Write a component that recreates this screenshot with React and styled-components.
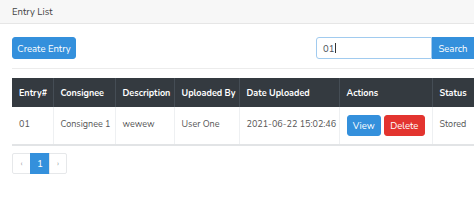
import React from "react";
import styled, { createGlobalStyle } from "styled-components";

const Global = createGlobalStyle`
  html, body { margin: 0; padding: 0; background: #fff; overflow: hidden; }
  body { font-family: "Nunito", Lato, "Noto Sans", sans-serif; color: #212529; }
  * { box-sizing: border-box; }
`;

const Card = styled.div`
  width: 474px;
  overflow: hidden;
`;

const CardHeader = styled.div`
  height: 24px;
  background: #f7f7f7;
  border-bottom: 1px solid #e6e6e6;
  padding: 0 12px;
  display: flex;
  align-items: center;
  font-size: 9.5px;
  color: #444;
`;

const Body = styled.div`
  padding: 12px 0 0 12px;
`;

const Toolbar = styled.div`
  display: flex;
  justify-content: space-between;
  align-items: center;
  height: 22px;
  margin-top: 1px;
`;

const Button = styled.button`
  font-family: inherit;
  font-size: 9.5px;
  color: #fff;
  background: ${(p) => p.$bg || "#3490dc"};
  border: 1px solid ${(p) => p.$bg || "#3490dc"};
  border-radius: ${(p) => (p.$flat ? "0" : "3px")};
  height: ${(p) => p.$h || 22}px;
  width: ${(p) => p.$w}px;
  padding: 0;
  display: inline-flex;
  align-items: center;
  justify-content: center;
  cursor: pointer;
`;

const SearchGroup = styled.div`
  display: flex;
  height: 22px;
`;

const SearchInput = styled.div`
  width: 116px;
  height: 22px;
  border: 1px solid #a1cbef;
  border-radius: 3px 0 0 3px;
  font-size: 9.5px;
  color: #495057;
  display: flex;
  align-items: center;
  padding-left: 6px;
`;

const Caret = styled.span`
  display: inline-block;
  width: 1px;
  height: 10px;
  background: #333;
  margin-left: 1px;
`;

const Hr = styled.div`
  height: 1px;
  background: #ececec;
  margin: 9px 0 9px 0;
`;

const Table = styled.table`
  border-collapse: collapse;
  table-layout: fixed;
  width: 470px;
  font-size: 9px;
`;

const Th = styled.th`
  background: #343a40;
  color: #fff;
  font-weight: 700;
  text-align: left;
  height: 29px;
  padding: 0 7px;
  border-left: 1px solid #454d55;
  white-space: nowrap;
  overflow: hidden;
  &:first-child { border-left: none; }
`;

const Td = styled.td`
  height: 38px;
  padding: 0 7px;
  vertical-align: top;
  padding-top: 11px;
  color: #555;
  border-left: 1px solid #eef0f2;
  border-bottom: 2px solid #e2e4e6;
  white-space: nowrap;
  overflow: hidden;
  &:first-child { border-left: none; }
`;

const ActionTd = styled(Td)`
  padding-top: 8px;
  padding-left: 7px;
`;

const Actions = styled.div`
  display: flex;
  gap: 3px;
`;

const Pager = styled.div`
  display: flex;
  margin-top: 7px;
  height: 21px;
`;

const PageItem = styled.div`
  width: ${(p) => p.$w}px;
  height: 21px;
  display: flex;
  align-items: center;
  justify-content: center;
  font-size: ${(p) => (p.$active ? 10 : 8)}px;
  color: ${(p) => (p.$active ? "#fff" : "#9aa0a6")};
  background: ${(p) => (p.$active ? "#3490dc" : "#fff")};
  border: 1px solid ${(p) => (p.$active ? "#3490dc" : "#e6e8ea")};
  margin-left: -1px;
  &:first-child { margin-left: 0; border-radius: 2px 0 0 2px; }
  &:last-child { border-radius: 0 2px 2px 0; }
`;

const cols = [41, 62, 59, 65, 100, 93, 50];

export default function App() {
  return (
    <Card>
      <Global />
      <CardHeader>Entry List</CardHeader>
      <Body>
        <Toolbar>
          <Button $h={22} $w={64}>Create Entry</Button>
          <SearchGroup>
            <SearchInput>
              01<Caret />
            </SearchInput>
            <Button $flat $h={22} $w={42}>Search</Button>
          </SearchGroup>
        </Toolbar>
        <Hr />
        <Table>
          <colgroup>
            {cols.map((w, i) => (
              <col key={i} style={{ width: w }} />
            ))}
          </colgroup>
          <thead>
            <tr>
              <Th>Entry#</Th>
              <Th>Consignee</Th>
              <Th>Description</Th>
              <Th>Uploaded By</Th>
              <Th>Date Uploaded</Th>
              <Th>Actions</Th>
              <Th>Status</Th>
            </tr>
          </thead>
          <tbody>
            <tr>
              <Td>01</Td>
              <Td>Consignee 1</Td>
              <Td>wewew</Td>
              <Td>User One</Td>
              <Td>2021-06-22 15:02:46</Td>
              <ActionTd>
                <Actions>
                  <Button $h={21} $w={35}>View</Button>
                  <Button $bg="#e3342f" $h={21} $w={41}>Delete</Button>
                </Actions>
              </ActionTd>
              <Td>Stored</Td>
            </tr>
          </tbody>
        </Table>
        <Pager>
          <PageItem $w={19}>‹</PageItem>
          <PageItem $w={20} $active>1</PageItem>
          <PageItem $w={18}>›</PageItem>
        </Pager>
      </Body>
    </Card>
  );
}
